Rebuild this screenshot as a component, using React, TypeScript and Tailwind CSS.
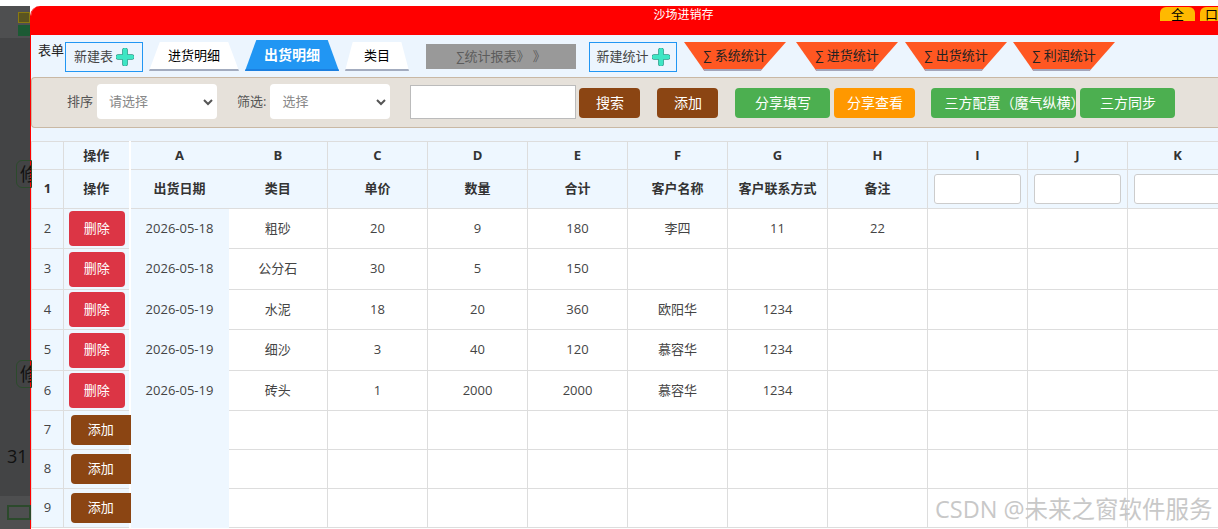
import React from 'react';

const FONT = { fontFamily: '"Open Sans", "Noto Sans CJK SC", sans-serif' };

// --- Table data ---
const columns = ['A', 'B', 'C', 'D', 'E', 'F', 'G', 'H', 'I', 'J', 'K'];
const fieldNames = ['出货日期', '类目', '单价', '数量', '合计', '客户名称', '客户联系方式', '备注'];

const rows = [
  { no: 2, h: 'h-[40px]', cells: ['2026-05-18', '粗砂', '20', '9', '180', '李四', '11', '22'] },
  { no: 3, h: 'h-[41px]', cells: ['2026-05-18', '公分石', '30', '5', '150', '', '', ''] },
  { no: 4, h: 'h-[40px]', cells: ['2026-05-19', '水泥', '18', '20', '360', '欧阳华', '1234', ''] },
  { no: 5, h: 'h-[41px]', cells: ['2026-05-19', '细沙', '3', '40', '120', '慕容华', '1234', ''] },
  { no: 6, h: 'h-[40px]', cells: ['2026-05-19', '砖头', '1', '2000', '2000', '慕容华', '1234', ''] },
];

const cellLine = 'border border-[#ddd]';

// column A is frozen: no side lines, and B has no left line against it
const dataCell = (i: number) => {
  if (i === 0) return 'border-y border-y-[#eef7ff] bg-[#eef7ff]';
  if (i === 1) return `${cellLine} border-l-0`;
  return cellLine;
};
const headCell = (i: number) => {
  if (i === 0) return 'border-y border-[#ddd]';
  if (i === 1) return `${cellLine} border-l-0`;
  return cellLine;
};

const PlusIcon = () => (
  <svg width="18" height="18" viewBox="0 0 19 19" className="shrink-0">
    <path d="M9.5 2.5v14M2.5 9.5h14" stroke="#2b7f75" strokeWidth="6" strokeLinecap="round" />
    <path d="M9.5 2.5v14M2.5 9.5h14" stroke="#3ee6c4" strokeWidth="5" strokeLinecap="round" />
  </svg>
);

const NewButton = ({ label, width }: { label: string; width: string }) => (
  <div className={`flex h-[30px] items-center justify-center gap-[3px] border border-[#2196f3] text-[13px] text-[#444] ${width}`}>
    {label}
    <PlusIcon />
  </div>
);

const Tab = ({ label, active, width }: { label: string; active?: boolean; width: string }) => (
  <div
    className={`flex items-center justify-center border-b-2 [clip-path:polygon(12%_0,88%_0,100%_100%,0_100%)] ${width} ${
      active
        ? 'h-[31px] border-b-[#1b7fe0] bg-[#2196f3] text-[14px] font-bold text-white'
        : 'h-[29px] border-b-[#a3acbf] bg-white text-[13px] text-black'
    }`}
  >
    {label}
  </div>
);

const StatTab = ({ label, className = '' }: { label: string; className?: string }) => (
  <div
    className={`flex h-[29px] w-[102px] items-center justify-center border-b-2 border-b-[#a3a6bb] bg-[#ff5722] text-[13px] text-[#222] [clip-path:polygon(0_0,100%_0,75%_100%,20%_100%)] ${className}`}
  >
    ∑ {label}
  </div>
);

const ActionButton = ({ label, className }: { label: string; className: string }) => (
  <div className={`flex h-[30px] items-center rounded text-[14px] whitespace-nowrap text-white ${className}`}>{label}</div>
);

const FakeSelect = ({ placeholder }: { placeholder: string }) => (
  <div className="-mt-[2px] flex h-[35px] w-[120px] items-center justify-between rounded bg-white pr-[3px] pl-3 text-[13px] text-[#888]">
    {placeholder}
    <svg width="12" height="12" viewBox="0 0 12 12">
      <path d="M2 4l4 4 4-4" fill="none" stroke="#555" strokeWidth="2" />
    </svg>
  </div>
);

export default function App() {
  return (
    <div className="relative flex h-[529px] w-[1218px] overflow-hidden bg-white pt-[6px]" style={FONT}>
      {/* Page behind the dialog */}
      <div className="relative w-[30px] shrink-0 bg-[#434445]">
        <div className="h-[32px] bg-[#4e4f50]" />
        <div className="absolute top-[6px] left-[18px] h-[11px] w-[12px] border border-[#8a7a10] bg-[#5b5420]" />
        <div className="absolute top-[19px] left-[18px] h-[11px] w-[12px] bg-[#1c5a34]" />
        <div className="absolute top-[154px] left-[16px] h-[28px] w-[16px] overflow-hidden rounded-l-md border border-[#2c4a2c] pl-[3px] text-[18px] leading-[26px] text-[#111]">
          修
        </div>
        <div className="absolute top-[354px] left-[16px] h-[28px] w-[16px] overflow-hidden rounded-l-md border border-[#2c4a2c] pl-[3px] text-[18px] leading-[26px] text-[#111]">
          修
        </div>
        <div className="absolute top-[437px] left-[7px] text-[18px] text-[#111]">31</div>
        <div className="absolute top-[490px] left-0 h-[33px] w-full bg-[#4e4f50]" />
        <div className="absolute top-[499px] left-[7px] h-[15px] w-[24px] border-2 border-[#2c4a2c]" />
      </div>

      {/* Dialog */}
      <div className="flex min-w-0 flex-1 flex-col overflow-hidden rounded-tl-[10px] border-l border-l-[#ff0000] bg-[#ecf5fe]">
        <div className="relative flex h-[29px] shrink-0 justify-center bg-[#ff0000] pt-[1px] text-[12px] leading-[16px] text-white">
          <span className="ml-[118px]">沙场进销存</span>
          <div className="absolute top-[1px] right-[23px] flex h-[14px] w-[35px] items-center justify-center rounded-t-md bg-[#ffb900] text-[13px] text-black">
            全
          </div>
          <div className="absolute top-[1px] right-[-16px] flex h-[14px] w-[34px] items-center justify-start rounded-t-md bg-[#ffb900] pl-[5px] text-[13px] text-black">
            口
          </div>
        </div>

        {/* Tab bar */}
        <div className="flex h-[42px] shrink-0 items-start pt-[7px] pl-[7px]">
          <span className="mr-[1px] text-[13px] leading-[16px] text-[#222]">表单</span>
          <NewButton label="新建表" width="w-[78px]" />
          <div className="ml-[6px] flex items-end gap-[6px]">
            <Tab label="进货明细" width="w-[90px]" />
            <div className="-mt-[2px]">
              <Tab label="出货明细" active width="w-[94px]" />
            </div>
            <Tab label="类目" width="w-[64px]" />
          </div>
          <div className="mt-[2px] ml-[17px] flex h-[25px] w-[150px] items-center justify-center bg-[#999] text-[13px] text-[#5c5c5c]">
            ∑统计报表》 》
          </div>
          <div className="ml-[13px]">
            <NewButton label="新建统计" width="w-[88px]" />
          </div>
          <div className="ml-[7px] flex">
            <StatTab label="系统统计" />
            <StatTab label="进货统计" className="ml-[10px]" />
            <StatTab label="出货统计" className="ml-[7px]" />
            <StatTab label="利润统计" className="ml-[6px]" />
          </div>
        </div>

        {/* Toolbar */}
        <div className="flex h-[51px] shrink-0 items-center rounded-l border border-r-0 border-[#c9b8a4] bg-[#e6e1da] pl-[35px] text-[13px] text-[#555]">
          <span className="-mt-[2px] mr-1">排序</span>
          <FakeSelect placeholder="请选择" />
          <span className="-mt-[2px] mr-1 ml-5">筛选:</span>
          <FakeSelect placeholder="选择" />
          <div className="-mt-[2px] ml-5 h-[34px] w-[166px] border border-[#bbb] bg-white" />
          <ActionButton label="搜索" className="ml-[3px] w-[61px] justify-center bg-[#8b4513]" />
          <ActionButton label="添加" className="ml-[17px] w-[61px] justify-center bg-[#8b4513]" />
          <ActionButton label="分享填写" className="ml-[17px] w-[95px] justify-center bg-[#4caf50]" />
          <ActionButton label="分享查看" className="ml-[4px] w-[81px] justify-center bg-[#ff9800]" />
          <ActionButton label="三方配置（魔气纵横）" className="ml-[16px] w-[145px] overflow-hidden bg-[#4caf50] pl-[13px]" />
          <ActionButton label="三方同步" className="ml-[4px] w-[95px] justify-center bg-[#4caf50]" />
        </div>

        {/* Sheet */}
        <div className="mt-[13px] min-h-0 flex-1 overflow-hidden bg-white">
          <table className="w-[1196px] table-fixed border-collapse text-center text-[13px] text-[#444]">
            <colgroup>
              <col className="w-[32px]" />
              <col className="w-[66px]" />
              <col className="w-[99px]" />
              <col className="w-[99px]" />
              {columns.slice(2).map((c) => (
                <col key={c} className="w-[100px]" />
              ))}
            </colgroup>
            <thead className="bg-[#eef7ff] font-bold text-[#333]">
              <tr className="h-[28px]">
                <th className={cellLine} />
                <th className={`${cellLine} border-r-2 border-r-white`}>操作</th>
                {columns.map((c, i) => (
                  <th key={c} className={headCell(i)}>
                    {c}
                  </th>
                ))}
              </tr>
              <tr className="h-[39px]">
                <th className={cellLine}>1</th>
                <th className={`${cellLine} border-r-2 border-r-white`}>操作</th>
                {fieldNames.map((name, i) => (
                  <th key={name} className={headCell(i)}>
                    {name}
                  </th>
                ))}
                {['I', 'J', 'K'].map((c) => (
                  <th key={c} className={`${cellLine} px-[6px]`}>
                    <div className="h-[30px] w-[87px] rounded-[3px] border border-[#ccc] bg-white" />
                  </th>
                ))}
              </tr>
            </thead>
            <tbody className="bg-white">
              {rows.map((row) => (
                <tr key={row.no} className={row.h}>
                  <td className={`${cellLine} bg-[#eef7ff]`}>{row.no}</td>
                  <td className={`${cellLine} border-r-2 border-r-white bg-[#eef7ff] pr-[4px] pl-[5px]`}>
                    <div className="flex h-[35px] items-center justify-center rounded bg-[#dc3545] text-white">删除</div>
                  </td>
                  {row.cells.map((value, i) => (
                    <td key={i} className={dataCell(i)}>
                      {value}
                    </td>
                  ))}
                  {['I', 'J', 'K'].map((c) => (
                    <td key={c} className={cellLine} />
                  ))}
                </tr>
              ))}
              {[7, 8, 9].map((no) => (
                <tr key={no} className="h-[39px]">
                  <td className={`${cellLine} bg-[#eef7ff]`}>{no}</td>
                  <td className={`${cellLine} border-r-2 border-r-white bg-[#eef7ff] pl-[7px]`}>
                    <div className="relative -mr-[2px] flex h-[30px] items-center justify-center rounded-l bg-[#8b4513] text-white">添加</div>
                  </td>
                  {columns.map((c, i) => (
                    <td key={c} className={dataCell(i)} />
                  ))}
                </tr>
              ))}
            </tbody>
          </table>
        </div>
      </div>

      {/* Watermark */}
      <div className="absolute top-[493px] left-[935px] text-[23.5px] leading-[32px] whitespace-nowrap text-[#c8c8c8]">
        CSDN @未来之窗软件服务
      </div>
    </div>
  );
}
